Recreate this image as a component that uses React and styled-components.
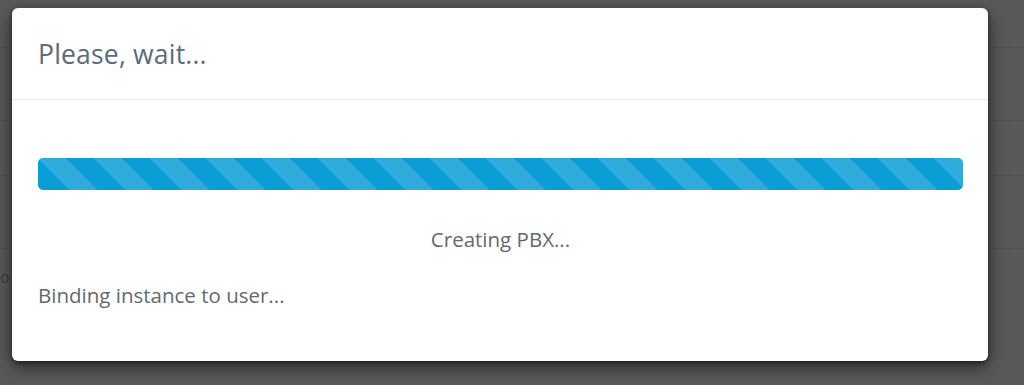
import React from 'react';
import styled, { createGlobalStyle } from 'styled-components';

const GlobalStyle = createGlobalStyle`
  html, body {
    margin: 0;
    padding: 0;
    background: #595959;
    font-family: "Open Sans", Lato, "Liberation Sans", sans-serif;
  }
`;

const Page = styled.div`
  position: relative;
  width: 1024px;
  height: 385px;
  overflow: hidden;
  background: #595959;
`;

const BackRow = styled.div`
  height: ${(props) => props.h}px;
  border-bottom: 1px solid #4f4f4f;
`;

const BackGlyph = styled.span`
  position: absolute;
  left: 0;
  top: 266px;
  width: 10px;
  overflow: hidden;
  font-size: 16px;
  color: #3c3c3c;
`;

const Modal = styled.div`
  position: absolute;
  top: 8px;
  left: 12px;
  width: 976px;
  height: 353px;
  background: #fff;
  border-radius: 6px;
  box-shadow: 0 6px 18px rgba(0, 0, 0, 0.55), 0 2px 4px rgba(0, 0, 0, 0.4);
  display: flex;
  flex-direction: column;
  overflow: hidden;
`;

const Header = styled.div`
  height: 92px;
  box-sizing: border-box;
  padding: 0 26px;
  display: flex;
  align-items: center;
  border-bottom: 1px solid #e6e6e6;
`;

const Title = styled.h4`
  margin: 0;
  font-size: 26.5px;
  font-weight: 400;
  letter-spacing: 0.2px;
  color: #5b6b7a;
`;

const Body = styled.div`
  padding: 58px 25px 0 26px;
  display: flex;
  flex-direction: column;
`;

const Progress = styled.div`
  height: 32px;
  border-radius: 5px;
  background-color: #0b9dd5;
  background-image: linear-gradient(
    45deg,
    rgba(255, 255, 255, 0.15) 25%,
    transparent 25%,
    transparent 50%,
    rgba(255, 255, 255, 0.15) 50%,
    rgba(255, 255, 255, 0.15) 75%,
    transparent 75%,
    transparent
  );
  background-size: 56px 56px;
`;

const Caption = styled.p`
  margin: 36px 0 0;
  text-align: center;
  font-size: 20.5px;
  color: #5f6a72;
  line-height: 26px;
`;

const Status = styled.p`
  margin: 30px 0 0;
  font-size: 20.5px;
  color: #5f6a72;
  line-height: 26px;
`;

const App = () => {
  return (
    <Page>
      <GlobalStyle />
      <BackRow h={47} />
      <BackRow h={72} />
      <BackRow h={54} />
      <BackRow h={72} />
      <BackGlyph>o</BackGlyph>
      <Modal>
        <Header>
          <Title>Please, wait...</Title>
        </Header>
        <Body>
          <Progress />
          <Caption>Creating PBX...</Caption>
          <Status>Binding instance to user...</Status>
        </Body>
      </Modal>
    </Page>
  );
};

export default App;
